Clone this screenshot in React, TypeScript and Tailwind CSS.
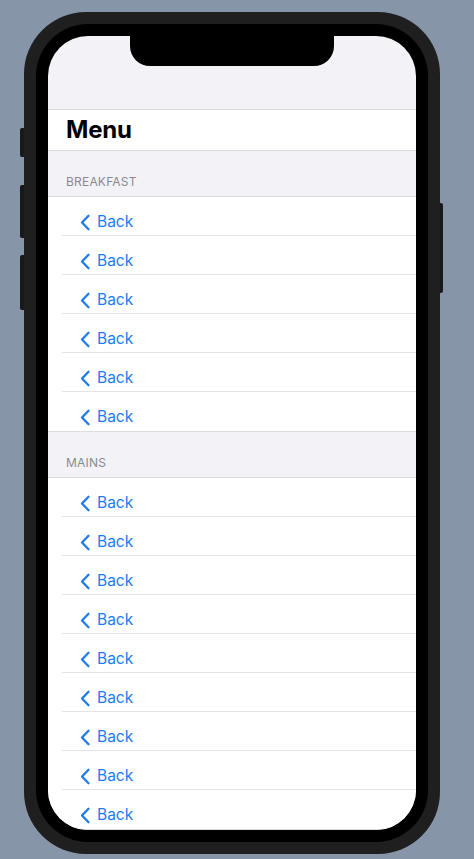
const breakfast = Array.from({ length: 6 }, (_, i) => `b${i}`);
const mains = Array.from({ length: 9 }, (_, i) => `m${i}`);

function Chevron() {
  return (
    <svg width="12" height="17" viewBox="0 0 12 17" fill="none" className="shrink-0">
      <path d="M9.5 1.8 L3 8.5 L9.5 15.2" stroke="#1b7cf2" strokeWidth="2.3" strokeLinecap="round" strokeLinejoin="round" />
    </svg>
  );
}

function BackRow({ last }: { last: boolean }) {
  return (
    <div className="bg-white pl-[14px]">
      <div className={`h-[39px] flex items-start pt-[15px] ${last ? '' : 'border-b border-[#e3e3e8]'}`}>
        <button className="flex items-center gap-[6px] pl-[17px] h-[20px] text-[15.5px] leading-[20px] text-[#1b7cf2]">
          <Chevron />
          <span>Back</span>
        </button>
      </div>
    </div>
  );
}

function Section({ title, rows }: { title: string; rows: string[] }) {
  return (
    <div>
      <div className="h-[46px] bg-[#f2f2f7] border-b border-[#dcdce0] pl-[18px] pt-[24px] text-[12px] leading-[14px]">
        <span className="tracking-[0.2px] text-[#8a8a8e] uppercase">{title}</span>
      </div>
      {rows.map((r, i) => (
        <BackRow key={r} last={i === rows.length - 1} />
      ))}
      <div className="border-b border-[#dcdce0]"></div>
    </div>
  );
}

export default function App() {
  return (
    <div className="w-[474px] h-[859px] overflow-hidden bg-[#8696a8] pt-[12px] pl-[24px]" style={{ fontFamily: 'Inter, "Liberation Sans", sans-serif' }}>
      <div className="relative w-[416px] h-[842px] rounded-[62px] bg-[#1f1f20] p-[12px]">
        {/* side buttons */}
        <div className="absolute left-[-4px] top-[116px] w-[4px] h-[29px] rounded-l-[2px] bg-[#19191b]"></div>
        <div className="absolute left-[-4px] top-[173px] w-[4px] h-[53px] rounded-l-[2px] bg-[#19191b]"></div>
        <div className="absolute left-[-4px] top-[243px] w-[4px] h-[55px] rounded-l-[2px] bg-[#19191b]"></div>
        <div className="absolute right-[-3px] top-[191px] w-[3px] h-[90px] rounded-r-[2px] bg-[#19191b]"></div>

        <div className="w-full h-full rounded-[52px] bg-black p-[12px]">
          <div className="relative w-full h-full rounded-[40px] overflow-hidden bg-[#f2f2f7]">
            <div className="absolute left-[82px] top-0 w-[204px] h-[30px] rounded-b-[20px] bg-black"></div>

            <div className="h-[74px] border-b border-[#d8d8dc]"></div>
            <div className="h-[41px] bg-white border-b border-[#dcdce0] pl-[18px] flex items-center">
              <h1 className="text-[24px] font-bold leading-[30px] text-black tracking-[-0.2px]">Menu</h1>
            </div>

            <Section title="Breakfast" rows={breakfast} />
            <Section title="Mains" rows={mains} />
          </div>
        </div>
      </div>
    </div>
  );
}
